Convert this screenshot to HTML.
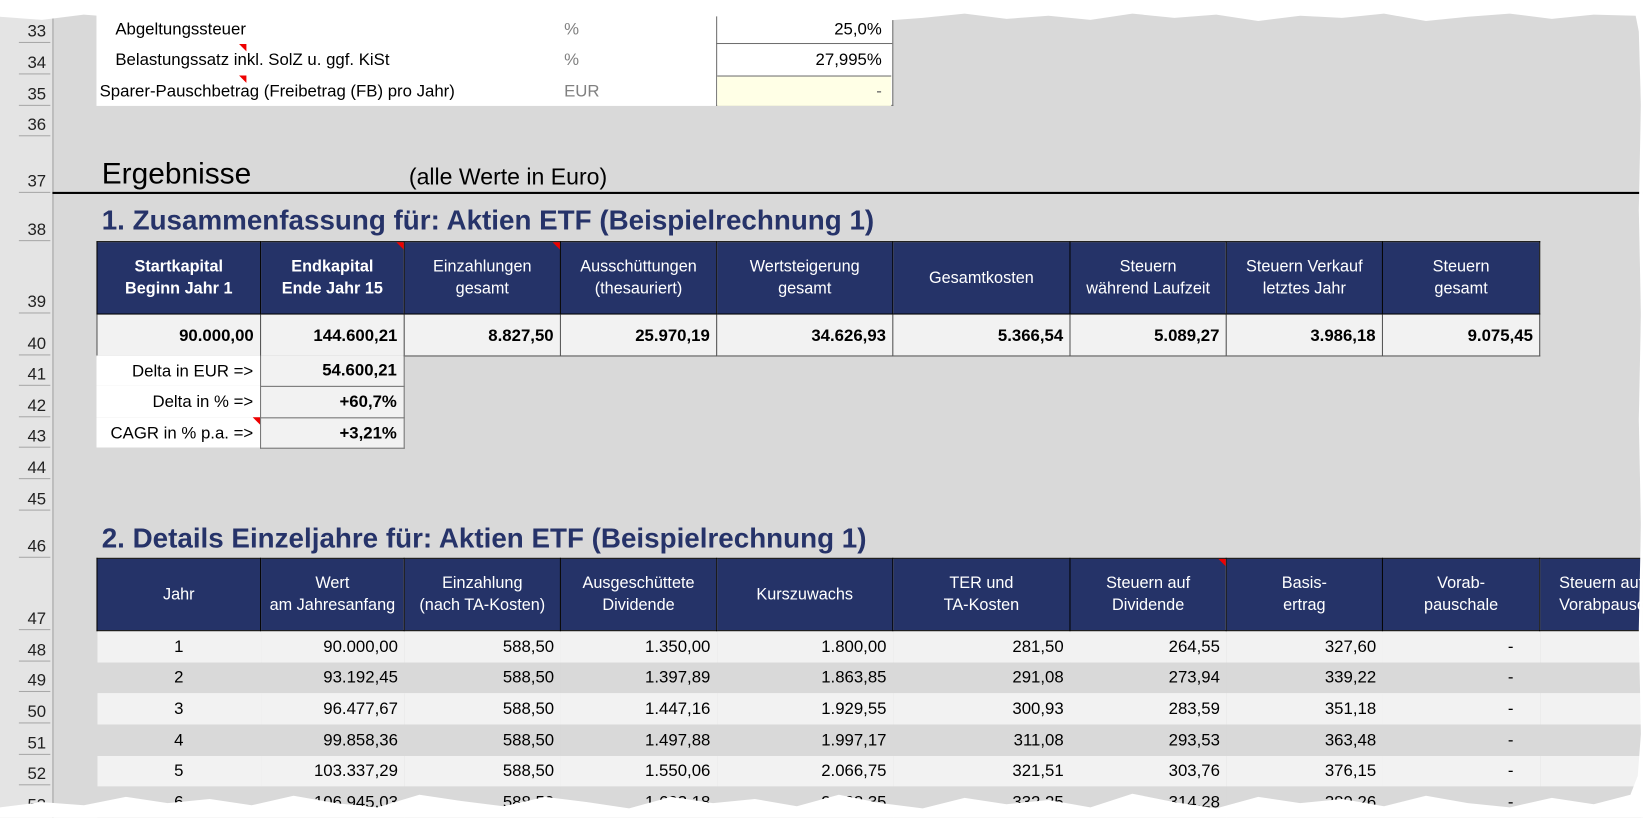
<!DOCTYPE html>
<html><head><meta charset="utf-8">
<style>
html,body{margin:0;padding:0;background:#fff;overflow:hidden;width:1643px;height:817px}
#w{position:absolute;left:0;top:0;width:1567px;height:780px;transform:scale(1.0485);transform-origin:0 0;overflow:hidden;font-family:"Liberation Sans",Arial,sans-serif;}
#sheet{position:absolute;left:0;top:0;width:1565px;height:780px;background:#d9d9d9}
#rh{position:absolute;left:0;top:0;width:50px;height:780px;background:#e4e4e4;border-right:1px solid #a0a0a0}
.rn{position:absolute;left:18px;width:30px;text-align:right;font-size:16px;color:#222;border-bottom:1px solid #a8a8a8;box-sizing:border-box;display:flex;align-items:flex-end;justify-content:flex-end;padding-bottom:0px;padding-right:4px}
.abs{position:absolute}
.t{font-size:16px;color:#000;white-space:nowrap}
table{border-collapse:collapse;position:absolute;table-layout:fixed}
td{padding:0 6px;font-size:16px;white-space:nowrap;overflow:hidden;padding-top:2px}
th{background:#253368;color:#fff;font-weight:normal;font-size:15.5px;line-height:21px;border:1px solid #000;padding:0;overflow:hidden;white-space:nowrap}
.tri{position:absolute;width:0;height:0;border-top:7px solid #e00;border-left:7px solid transparent}
</style></head><body>
<div id="w">
<div id="sheet">
<div id="rh"></div>
<div class="rn" style="top:15px;height:26px">33</div>
<div class="rn" style="top:41px;height:30px">34</div>
<div class="rn" style="top:71px;height:30px">35</div>
<div class="rn" style="top:101px;height:29px">36</div>
<div class="rn" style="top:130px;height:54px">37</div>
<div class="rn" style="top:184px;height:46px">38</div>
<div class="rn" style="top:230px;height:69px">39</div>
<div class="rn" style="top:299px;height:40px">40</div>
<div class="rn" style="top:339px;height:29px">41</div>
<div class="rn" style="top:368px;height:30px">42</div>
<div class="rn" style="top:398px;height:29px">43</div>
<div class="rn" style="top:427px;height:30px">44</div>
<div class="rn" style="top:457px;height:30px">45</div>
<div class="rn" style="top:487px;height:45px">46</div>
<div class="rn" style="top:532px;height:69px">47</div>
<div class="rn" style="top:601px;height:30px">48</div>
<div class="rn" style="top:631px;height:29px">49</div>
<div class="rn" style="top:660px;height:30px">50</div>
<div class="rn" style="top:690px;height:30px">51</div>
<div class="rn" style="top:720px;height:29px">52</div>
<div class="rn" style="top:749px;height:30px">53</div>

<div class="abs" style="left:92px;top:0;width:759px;height:101px;background:#fff"></div>
<div class="abs t" style="left:110px;top:20px">Abgeltungssteuer</div>
<div class="abs t" style="left:110px;top:49px">Belastungssatz inkl. SolZ u. ggf. KiSt</div>
<div class="abs t" style="left:95px;top:79px">Sparer-Pauschbetrag (Freibetrag (FB) pro Jahr)</div>
<div class="tri" style="left:228px;top:42px"></div>
<div class="tri" style="left:228px;top:72px"></div>
<div class="abs t" style="left:538px;top:20px;color:#808080">%</div>
<div class="abs t" style="left:538px;top:49px;color:#808080">%</div>
<div class="abs t" style="left:538px;top:79px;color:#808080">EUR</div>
<div class="abs" style="left:683px;top:10px;width:167px;height:90px;border:1px solid #6f6f6f;border-top:none"></div>
<div class="abs" style="left:683px;top:41px;width:168px;height:1px;background:#6f6f6f"></div>
<div class="abs" style="left:684px;top:72px;width:166px;height:28px;background:#ffffe6;border-top:1px solid #6f6f6f"></div>
<div class="abs t" style="left:683px;top:20px;width:158px;text-align:right">25,0%</div>
<div class="abs t" style="left:683px;top:49px;width:158px;text-align:right">27,995%</div>
<div class="abs t" style="left:683px;top:79px;width:158px;text-align:right;color:#666">-</div>

<div class="abs" style="left:97px;top:150px;font-size:28.5px;color:#000">Ergebnisse</div>
<div class="abs" style="left:390px;top:156px;font-size:22px;color:#000">(alle Werte in Euro)</div>
<div class="abs" style="left:50px;top:183px;width:1517px;height:2px;background:#000"></div>

<div class="abs" style="left:97px;top:195px;font-size:26.5px;font-weight:bold;color:#263369">1. Zusammenfassung für: Aktien ETF (Beispielrechnung 1)</div>

<table style="left:92px;top:230px;width:1376px">
<colgroup><col style="width:156px"><col style="width:137px"><col style="width:149px"><col style="width:149px"><col style="width:168px"><col style="width:169px"><col style="width:149px"><col style="width:149px"><col style="width:150px"></colgroup>
<tr style="height:69px"><th style="font-weight:bold">Startkapital<br>Beginn Jahr 1</th><th style="font-weight:bold">Endkapital<br>Ende Jahr 15</th><th>Einzahlungen<br>gesamt</th><th>Ausschüttungen<br>(thesauriert)</th><th>Wertsteigerung<br>gesamt</th><th>Gesamtkosten</th><th>Steuern<br>während Laufzeit</th><th>Steuern Verkauf<br>letztes Jahr</th><th>Steuern<br>gesamt</th></tr>
<tr style="height:40px;background:#f2f2f2;font-weight:bold"><td style="text-align:right;border:1px solid #555;font-weight:bold">90.000,00</td><td style="text-align:right;border:1px solid #555;font-weight:bold">144.600,21</td><td style="text-align:right;border:1px solid #555;font-weight:bold">8.827,50</td><td style="text-align:right;border:1px solid #555;font-weight:bold">25.970,19</td><td style="text-align:right;border:1px solid #555;font-weight:bold">34.626,93</td><td style="text-align:right;border:1px solid #555;font-weight:bold">5.366,54</td><td style="text-align:right;border:1px solid #555;font-weight:bold">5.089,27</td><td style="text-align:right;border:1px solid #555;font-weight:bold">3.986,18</td><td style="text-align:right;border:1px solid #555;font-weight:bold">9.075,45</td></tr>
</table>
<div class="tri" style="left:378px;top:231px"></div>
<div class="tri" style="left:527px;top:231px"></div>

<table style="left:92px;top:339px;width:293px">
<colgroup><col style="width:156px"><col style="width:137px"></colgroup>
<tr style="height:29px"><td style="background:#fff;text-align:right">Delta in EUR =&gt;</td><td style="background:#f2f2f2;text-align:right;font-weight:bold;border:1px solid #777;border-top:none">54.600,21</td></tr>
<tr style="height:30px"><td style="background:#fff;text-align:right">Delta in % =&gt;</td><td style="background:#f2f2f2;text-align:right;font-weight:bold;border:1px solid #777">+60,7%</td></tr>
<tr style="height:29px"><td style="background:#fff;text-align:right">CAGR in % p.a. =&gt;</td><td style="background:#f2f2f2;text-align:right;font-weight:bold;border:1px solid #777">+3,21%</td></tr>
</table>
<div class="tri" style="left:241px;top:398px"></div>

<div class="abs" style="left:97px;top:498px;font-size:26.5px;font-weight:bold;color:#263369">2. Details Einzeljahre für: Aktien ETF (Beispielrechnung 1)</div>

<table style="left:92px;top:532px;width:1526px">
<colgroup><col style="width:156px"><col style="width:137px"><col style="width:149px"><col style="width:149px"><col style="width:168px"><col style="width:169px"><col style="width:149px"><col style="width:149px"><col style="width:150px"><col style="width:150px"></colgroup>
<tr style="height:69px"><th>Jahr</th><th>Wert<br>am Jahresanfang</th><th>Einzahlung<br>(nach TA-Kosten)</th><th>Ausgeschüttete<br>Dividende</th><th>Kurszuwachs</th><th>TER und<br>TA-Kosten</th><th>Steuern auf<br>Dividende</th><th>Basis-<br>ertrag</th><th>Vorab-<br>pauschale</th><th style="text-align:left;padding-left:18px">Steuern auf<br>Vorabpauschale</th></tr>
<tr style="height:30px;background:#f2f2f2"><td style="text-align:center">1</td><td style="text-align:right">90.000,00</td><td style="text-align:right">588,50</td><td style="text-align:right">1.350,00</td><td style="text-align:right">1.800,00</td><td style="text-align:right">281,50</td><td style="text-align:right">264,55</td><td style="text-align:right">327,60</td><td style="text-align:right;padding-right:25px">-</td><td></td></tr>
<tr style="height:29px;background:#d9d9d9"><td style="text-align:center">2</td><td style="text-align:right">93.192,45</td><td style="text-align:right">588,50</td><td style="text-align:right">1.397,89</td><td style="text-align:right">1.863,85</td><td style="text-align:right">291,08</td><td style="text-align:right">273,94</td><td style="text-align:right">339,22</td><td style="text-align:right;padding-right:25px">-</td><td></td></tr>
<tr style="height:30px;background:#f2f2f2"><td style="text-align:center">3</td><td style="text-align:right">96.477,67</td><td style="text-align:right">588,50</td><td style="text-align:right">1.447,16</td><td style="text-align:right">1.929,55</td><td style="text-align:right">300,93</td><td style="text-align:right">283,59</td><td style="text-align:right">351,18</td><td style="text-align:right;padding-right:25px">-</td><td></td></tr>
<tr style="height:30px;background:#d9d9d9"><td style="text-align:center">4</td><td style="text-align:right">99.858,36</td><td style="text-align:right">588,50</td><td style="text-align:right">1.497,88</td><td style="text-align:right">1.997,17</td><td style="text-align:right">311,08</td><td style="text-align:right">293,53</td><td style="text-align:right">363,48</td><td style="text-align:right;padding-right:25px">-</td><td></td></tr>
<tr style="height:29px;background:#f2f2f2"><td style="text-align:center">5</td><td style="text-align:right">103.337,29</td><td style="text-align:right">588,50</td><td style="text-align:right">1.550,06</td><td style="text-align:right">2.066,75</td><td style="text-align:right">321,51</td><td style="text-align:right">303,76</td><td style="text-align:right">376,15</td><td style="text-align:right;padding-right:25px">-</td><td></td></tr>
<tr style="height:30px;background:#d9d9d9"><td style="text-align:center">6</td><td style="text-align:right">106.945,03</td><td style="text-align:right">588,50</td><td style="text-align:right">1.603,18</td><td style="text-align:right">2.138,35</td><td style="text-align:right">332,25</td><td style="text-align:right">314,28</td><td style="text-align:right">389,26</td><td style="text-align:right;padding-right:25px">-</td><td></td></tr>
</table>
<div class="tri" style="left:1162px;top:533px"></div>
</div>

<svg class="abs" style="left:0;top:0" width="1567" height="780" viewBox="0 0 1567 780">
<polygon fill="#fff" points="0,0 1567,0 1567,780 0,780 0,770 40,765 80,768 120,760 160,766 200,762 240,768 280,759 320,766 360,770 400,758 440,764 480,769 520,760 560,765 600,771 640,760 680,766 720,762 760,769 800,758 840,766 880,771 920,761 960,767 1000,763 1040,770 1080,757 1120,765 1160,771 1200,760 1240,766 1280,762 1320,769 1360,759 1400,766 1440,770 1480,761 1520,767 1555,758 1562,740 1565,700 1563,600 1565,500 1563,400 1565,300 1563,200 1565,100 1563,30 1560,15 1520,14 1480,18 1440,13 1400,16 1360,20 1320,13 1280,17 1240,15 1200,20 1160,14 1120,17 1080,13 1040,19 1000,15 960,18 920,13 880,17 840,20 800,14 760,18 720,12 680,16 640,19 600,14 560,17 520,13 480,18 440,15 400,19 360,13 320,17 280,14 240,19 200,15 160,12 120,17 80,14 40,19 0,16"/>
</svg>
</div>
</body></html>
